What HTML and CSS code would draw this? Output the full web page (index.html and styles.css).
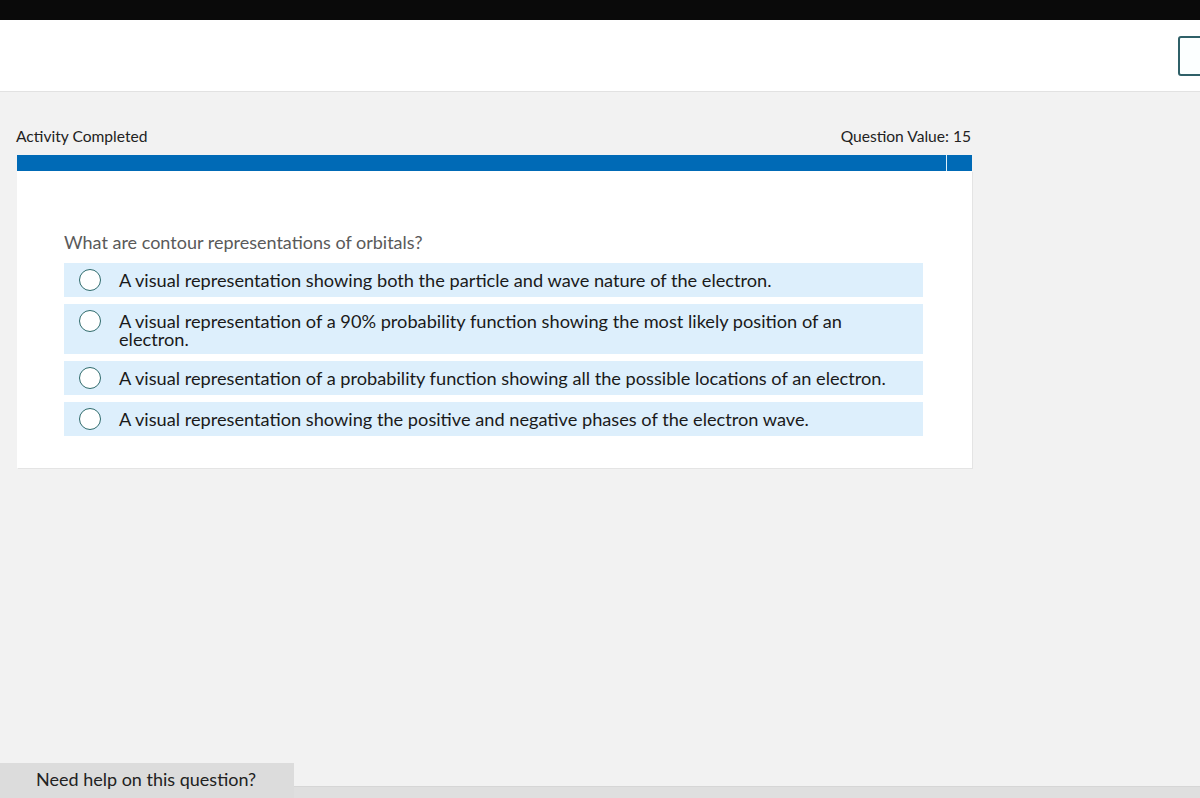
FILE: index.html
```html
<!DOCTYPE html>
<html lang="en">

<head>
  <meta charset="UTF-8">
  <meta name="viewport" content="width=device-width, initial-scale=1.0">
  <title>Question</title>
  <link rel="stylesheet" href="styles.css">
</head>

<body>
  <div class="topbar"></div>

  <div class="header">
    <div class="header-box"></div>
  </div>

  <div class="main">
    <div class="meta-row">
      <span>Activity Completed</span>
      <span>Question Value: 15</span>
    </div>

    <div class="progress">
      <div class="progress-done"></div>
      <div class="progress-rest"></div>
    </div>

    <div class="card">
      <p class="question">What are contour representations of orbitals?</p>
      <ul class="options">
        <li class="option">
          <span class="radio"></span>
          <span class="option-text">A visual representation showing both the particle and wave nature of the electron.</span>
        </li>
        <li class="option">
          <span class="radio"></span>
          <span class="option-text">A visual representation of a 90% probability function showing the most likely position of an electron.</span>
        </li>
        <li class="option">
          <span class="radio"></span>
          <span class="option-text">A visual representation of a probability function showing all the possible locations of an electron.</span>
        </li>
        <li class="option">
          <span class="radio"></span>
          <span class="option-text">A visual representation showing the positive and negative phases of the electron wave.</span>
        </li>
      </ul>
    </div>
  </div>

  <div class="footer">
    <div class="help-tab">Need help on this question?</div>
    <div class="footer-strip"></div>
  </div>
</body>

</html>
```

FILE: styles.css
```css
html,
body {
  height: 100%;
}

body {
  margin: 0;
  padding: 0;
  background-color: #F2F2F2;
  color: #222222;
  font-family: Lato, "Liberation Sans", sans-serif;
  display: flex;
  flex-direction: column;
  overflow: hidden;
}

.topbar {
  height: 20px;
  background-color: #0A0A0A;
  flex-shrink: 0;
}

.header {
  height: 71px;
  background-color: #FFFFFF;
  border-bottom: 1px solid #E2E2E2;
  display: flex;
  justify-content: flex-end;
  align-items: flex-start;
  flex-shrink: 0;
}

.header-box {
  width: 40px;
  height: 36px;
  margin-top: 16px;
  margin-right: -22px;
  border: 2px solid #2F6068;
  border-radius: 3px;
  background-color: #FCFFFF;
}

.main {
  flex: 1;
  width: 956px;
  padding: 34px 0 0 16px;
}

.meta-row {
  display: flex;
  justify-content: space-between;
  font-size: 15.6px;
  line-height: 20px;
  color: #222222;
  padding-right: 1px;
}

.progress {
  display: flex;
  height: 16px;
  margin-top: 9px;
  margin-left: 1px;
}

.progress-done {
  flex: 1;
  background-color: #006AB6;
  border-right: 1px solid #DDF0FA;
}

.progress-rest {
  width: 25px;
  background-color: #006AB6;
}

.card {
  background-color: #FFFFFF;
  margin-left: 1px;
  padding: 60px 49px 32px 47px;
  box-shadow: 1px 1px 0 #E4E4E4;
}

.question {
  margin: 0 0 10px 0;
  font-size: 18px;
  line-height: 22px;
  color: #5A5A5A;
}

.options {
  list-style: none;
  margin: 0;
  padding: 0;
  display: flex;
  flex-direction: column;
  gap: 7px;
}

.option {
  display: flex;
  align-items: flex-start;
  background-color: #DDEFFC;
  padding: 6px 30px 6px 15px;
}

.radio {
  width: 20px;
  height: 20px;
  border: 1.5px solid #2F6B6C;
  border-radius: 50%;
  background-color: #FFFFFF;
  flex-shrink: 0;
  margin-right: 18px;
}

.option-text {
  font-size: 18.2px;
  line-height: 18px;
  padding-top: 2px;
  color: #1A1A1A;
}

.footer {
  display: flex;
  align-items: flex-end;
  height: 35px;
  flex-shrink: 0;
}

.help-tab {
  width: 258px;
  height: 35px;
  padding-left: 36px;
  background-color: #DCDCDC;
  font-size: 18px;
  line-height: 32px;
  color: #222222;
}

.footer-strip {
  flex: 1;
  height: 11px;
  background-color: #DFDFDF;
  border-top: 1px solid #D6D6D6;
}
```
